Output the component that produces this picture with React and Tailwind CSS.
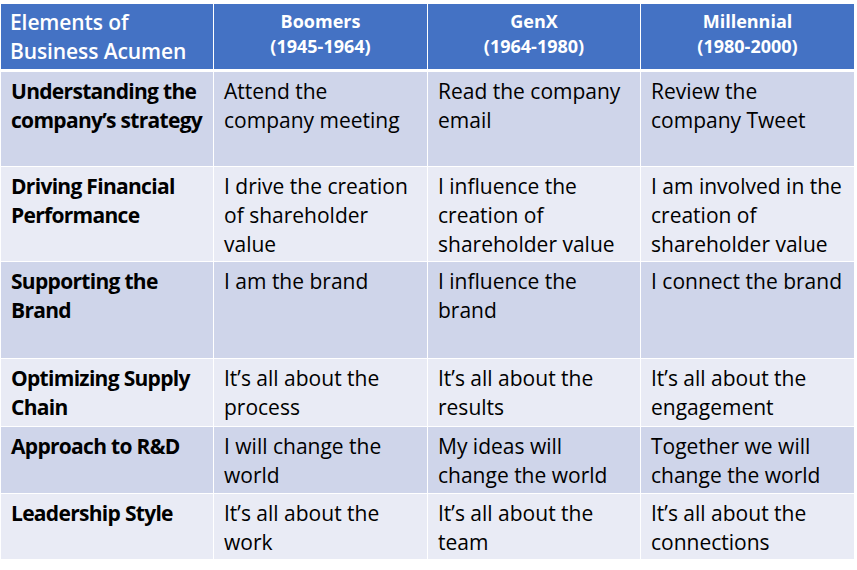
import React from "react";

const rows = [
  {
    h: "h-[94px]",
    bg: "bg-[#cfd5ea]",
    cells: [
      ["Understanding the", "company’s strategy"],
      ["Attend the", "company meeting"],
      ["Read the company", "email"],
      ["Review the", "company Tweet"],
    ],
  },
  {
    h: "h-[94px]",
    bg: "bg-[#e9ebf5]",
    cells: [
      ["Driving Financial", "Performance"],
      ["I drive the creation", "of shareholder", "value"],
      ["I influence the", "creation of", "shareholder value"],
      ["I am involved in the", "creation of", "shareholder value"],
    ],
  },
  {
    h: "h-[96px]",
    bg: "bg-[#cfd5ea]",
    cells: [
      ["Supporting the", "Brand"],
      ["I am the brand"],
      ["I influence the", "brand"],
      ["I connect the brand"],
    ],
  },
  {
    h: "h-[67px]",
    bg: "bg-[#e9ebf5]",
    cells: [
      ["Optimizing Supply", "Chain"],
      ["It’s all about the", "process"],
      ["It’s all about the", "results"],
      ["It’s all about the", "engagement"],
    ],
  },
  {
    h: "h-[66px]",
    bg: "bg-[#cfd5ea]",
    cells: [
      ["Approach to R&D"],
      ["I will change the", "world"],
      ["My ideas will", "change the world"],
      ["Together we will", "change the world"],
    ],
  },
  {
    h: "h-[65px]",
    bg: "bg-[#e9ebf5]",
    cells: [
      ["Leadership Style"],
      ["It’s all about the", "work"],
      ["It’s all about the", "team"],
      ["It’s all about the", "connections"],
    ],
  },
];

const headers = [
  ["Boomers", "(1945-1964)"],
  ["GenX", "(1964-1980)"],
  ["Millennial", "(1980-2000)"],
];

export default function App() {
  return (
    <div
      className="w-[857px] h-[570px] bg-white pt-[4px] pl-[1px]"
      style={{ fontFamily: "'Open Sans', Lato, sans-serif" }}
    >
      <div className="w-[852px] flex flex-col">
        <div className="grid grid-cols-[212px_213px_212px_213px] gap-x-px h-[65px]">
          <div className="bg-[#4472c4] text-white font-semibold text-[21px] leading-[29px] pt-[4px] pl-[9px] tracking-[-0.1px]">
            <div>Elements of</div>
            <div>Business Acumen</div>
          </div>
          {headers.map((h, i) => (
            <div
              key={i}
              className="bg-[#4472c4] text-white font-bold text-[18px] leading-[25px] pt-[5px] text-center"
            >
              <div>{h[0]}</div>
              <div>{h[1]}</div>
            </div>
          ))}
        </div>
        <div className="h-[3px]" />
        <div className="flex flex-col gap-y-px">
          {rows.map((r, ri) => (
            <div
              key={ri}
              className={`grid grid-cols-[212px_213px_212px_213px] gap-x-px ${r.h}`}
            >
              {r.cells.map((c, ci) => (
                <div
                  key={ci}
                  className={`${r.bg} text-black leading-[29px] pt-[5px] pl-[10px] ${
                    ci === 0
                      ? "font-bold text-[21px] tracking-[-0.7px]"
                      : "font-normal text-[21px]"
                  }`}
                >
                  {c.map((l, li) => (
                    <div key={li} className="whitespace-nowrap">
                      {l}
                    </div>
                  ))}
                </div>
              ))}
            </div>
          ))}
        </div>
      </div>
    </div>
  );
}
